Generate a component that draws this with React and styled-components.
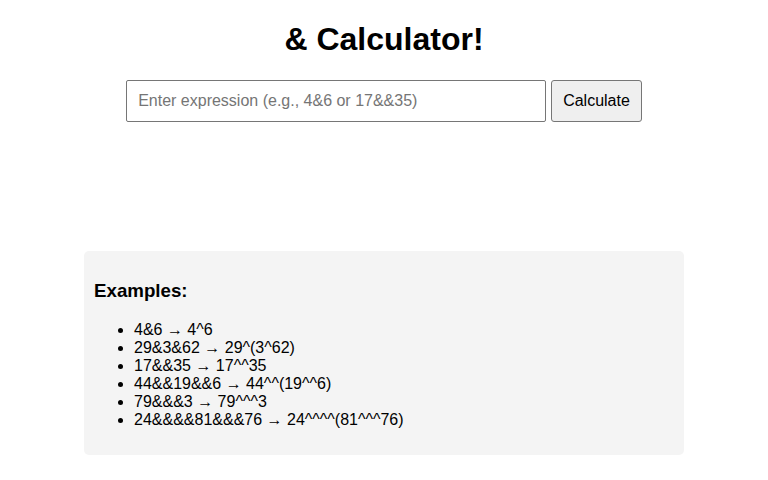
import React, { useState } from "react";
import styled, { createGlobalStyle } from "styled-components";

const GlobalStyle = createGlobalStyle`
  body {
    margin: 0;
    padding: 0 8px;
    background: #ffffff;
    color: #000000;
    font-family: "Liberation Sans", Arial, sans-serif;
  }
`;

const Page = styled.div`
  max-width: 600px;
  margin: 0 auto;
  padding-top: 1px;
`;

const Title = styled.h1`
  font-size: 32px;
  font-weight: bold;
  text-align: center;
  margin: 20px 0 22px;
`;

const Form = styled.form`
  display: flex;
  justify-content: center;
  gap: 5px;
`;

const ExprInput = styled.input`
  box-sizing: border-box;
  width: 420px;
  height: 42px;
  padding: 0 11px;
  font-family: inherit;
  font-size: 16px;
  border: 1px solid #767676;
  border-radius: 2px;
  &::placeholder {
    color: #757575;
  }
`;

const CalcButton = styled.button`
  box-sizing: border-box;
  height: 42px;
  padding: 0 11px;
  font-family: inherit;
  font-size: 16px;
  color: #000;
  background: #efefef;
  border: 1px solid #767676;
  border-radius: 3px;
`;

const Result = styled.div`
  min-height: 129px;
`;

const Examples = styled.div`
  background: #f4f4f4;
  border-radius: 5px;
  padding: 10px;
`;

const ExamplesTitle = styled.h3`
  font-size: 18.72px;
  margin: 19px 0;
`;

const ExampleList = styled.ul`
  margin: 16px 0;
  padding-left: 40px;
  font-size: 16px;
  line-height: 18px;
`;

const examples = [
  "4&6 → 4^6",
  "29&3&62 → 29^(3^62)",
  "17&&35 → 17^^35",
  "44&&19&&6 → 44^^(19^^6)",
  "79&&&3 → 79^^^3",
  "24&&&&81&&&76 → 24^^^^(81^^^76)",
];

export default function App() {
  const [expr, setExpr] = useState("");

  return (
    <Page>
      <GlobalStyle />
      <Title>&amp; Calculator!</Title>
      <Form onSubmit={(e) => e.preventDefault()}>
        <ExprInput
          value={expr}
          onChange={(e) => setExpr(e.target.value)}
          placeholder="Enter expression (e.g., 4&6 or 17&&35)"
        />
        <CalcButton type="submit">Calculate</CalcButton>
      </Form>
      <Result />
      <Examples>
        <ExamplesTitle>Examples:</ExamplesTitle>
        <ExampleList>
          {examples.map((ex) => (
            <li key={ex}>{ex}</li>
          ))}
        </ExampleList>
      </Examples>
    </Page>
  );
}
